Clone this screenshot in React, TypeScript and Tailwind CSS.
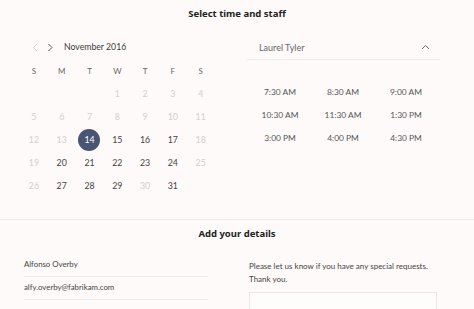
import React from "react";

const weeks: number[][] = [
  [0, 0, 0, 1, 2, 3, 4],
  [5, 6, 7, 8, 9, 10, 11],
  [12, 13, 14, 15, 16, 17, 18],
  [19, 20, 21, 22, 23, 24, 25],
  [26, 27, 28, 29, 30, 31, 0],
];

// days that can be booked
const open = [14, 15, 16, 17, 20, 21, 22, 23, 24, 27, 28, 29, 31];

const times = [
  "7:30 AM", "8:30 AM", "9:00 AM",
  "10:30 AM", "11:30 AM", "1:30 PM",
  "3:00 PM", "4:00 PM", "4:30 PM",
];

const Chevron = ({ dir, className }: { dir: "left" | "right" | "up"; className?: string }) => {
  const d = dir === "left" ? "M5 1 L1.5 4.5 L5 8" : dir === "right" ? "M1.5 1 L5 4.5 L1.5 8" : "M1 5 L4.5 1.5 L8 5";
  const w = dir === "up" ? 9 : 7;
  const h = dir === "up" ? 7 : 9;
  return (
    <svg width={w} height={h} viewBox={`0 0 ${w} ${h}`} className={className}>
      <path d={d} fill="none" stroke="currentColor" strokeWidth="1" />
    </svg>
  );
};

export default function App() {
  return (
    <div className="w-[474px] h-[309px] overflow-hidden bg-[#fdfaf9] text-[#333] font-['Lato',sans-serif] flex flex-col">
      <div className="shrink-0 h-[28px] flex items-center justify-center text-[9.5px] font-bold text-[#222] font-['Noto_Sans',sans-serif]">
        Select time and staff
      </div>

      <div className="shrink-0 h-[192px] flex border-b border-[#f1eceb]">
        {/* Calendar */}
        <div className="shrink-0 pl-[20px] w-[247px]">
          <div className="mt-[8px] h-[22px] flex items-center text-[8.7px]">
            <span className="ml-[7.5px] w-[15px] flex justify-center text-[#d2d0cf]"><Chevron dir="left" /></span>
            <span className="w-[15px] flex justify-center text-[#555]"><Chevron dir="right" /></span>
            <span className="ml-[6.5px] text-[#3a3a3a]">November 2016</span>
          </div>
          <div className="mt-[1px] grid grid-cols-[repeat(7,27.8px)] text-[8.8px]">
            {["S", "M", "T", "W", "T", "F", "S"].map((d, i) => (
              <div key={i} className="h-[23px] flex items-center justify-center text-[8px] text-[#666]">{d}</div>
            ))}
            {weeks.flat().map((n, i) => (
              <div key={i} className="h-[23px] flex items-center justify-center">
                {n === 14 ? (
                  <span className="w-[22px] h-[22px] rounded-full bg-[#4a5573] text-white flex items-center justify-center">{n}</span>
                ) : n ? (
                  <span className={open.includes(n) ? "text-[#444]" : "text-[#d2cfce]"}>{n}</span>
                ) : null}
              </div>
            ))}
          </div>
        </div>

        {/* Staff and times */}
        <div className="w-[193px]">
          <div className="mt-[8px] h-[24px] border-b border-[#f1eceb] flex items-center justify-between pl-[12px] pr-[10px] text-[9px] text-[#666]">
            <span>Laurel Tyler</span>
            <Chevron dir="up" className="text-[#666]" />
          </div>
          <div className="mt-[21px] pl-[1.5px] grid grid-cols-[repeat(3,63px)] text-[8.4px] text-[#555]">
            {times.map((t) => (
              <div key={t} className="h-[23px] flex items-center justify-center">{t}</div>
            ))}
          </div>
        </div>
      </div>

      <div className="shrink-0 h-[28px] flex items-center justify-center text-[9.5px] font-bold text-[#222] font-['Noto_Sans',sans-serif]">
        Add your details
      </div>

      <div className="shrink-0 mt-[6px] flex">
        <div className="shrink-0 pl-[24px] w-[249px] text-[7.8px] text-[#444]">
          <div className="w-[184px] h-[23px] flex items-center border-b border-[#efeae9]">Alfonso Overby</div>
          <div className="w-[184px] h-[23px] flex items-center border-b border-[#efeae9]">alfy.overby@fabrikam.com</div>
        </div>
        <div className="w-[188px] text-[8px] leading-[13px] text-[#444]">
          <p className="mt-[5.5px] whitespace-nowrap">Please let us know if you have any special requests.</p>
          <p>Thank you.</p>
          <div className="mt-[6px] h-[40px] border border-[#ece7e6] bg-[#fffdfc]" />
        </div>
      </div>
    </div>
  );
}
